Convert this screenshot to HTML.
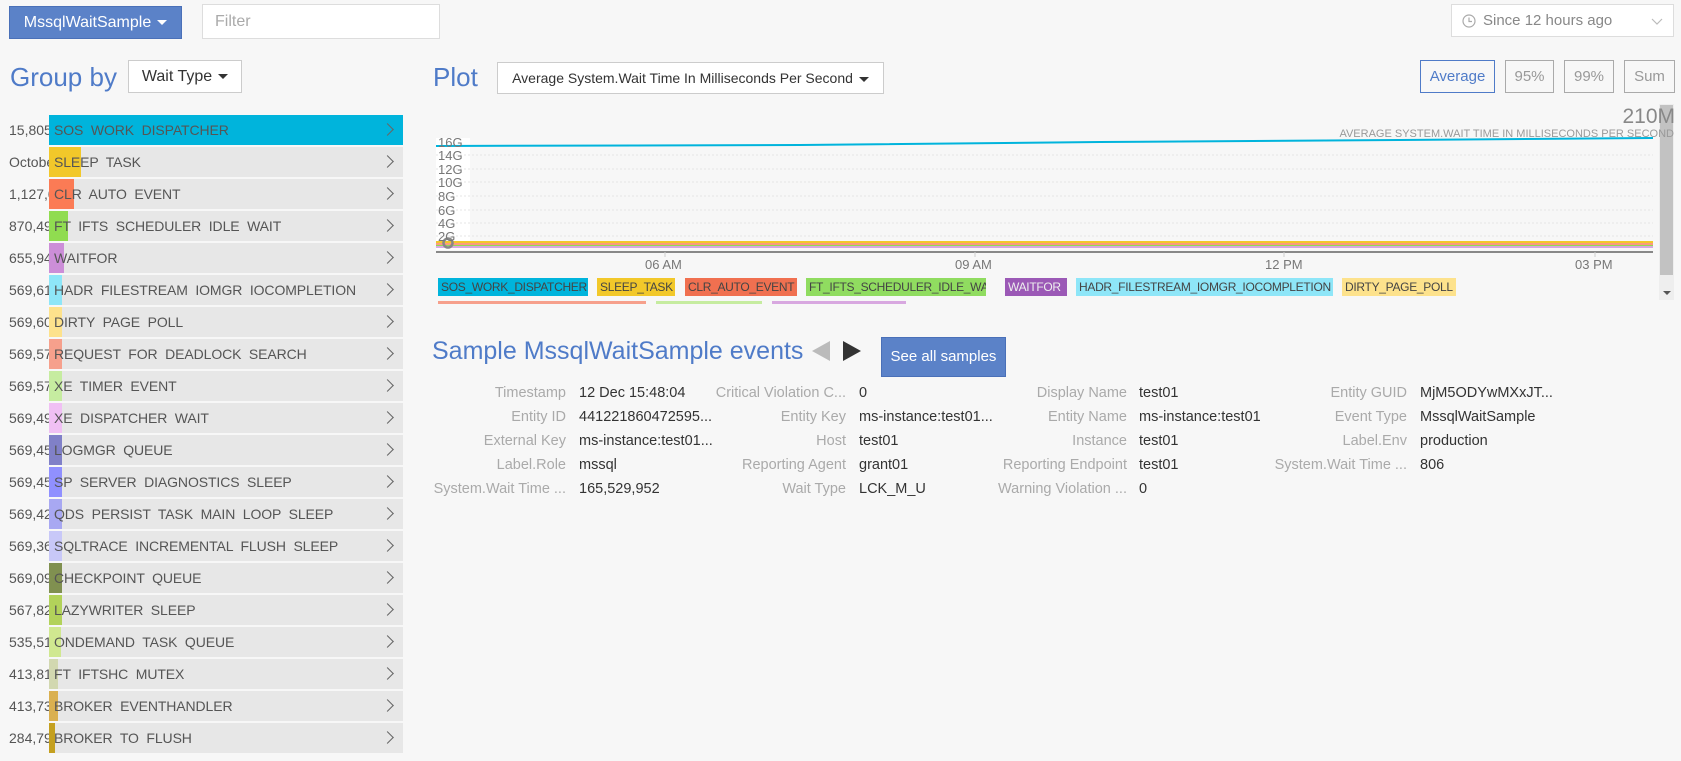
<!DOCTYPE html>
<html><head><meta charset="utf-8"><style>
*{box-sizing:border-box;margin:0;padding:0}
body{width:1681px;height:761px;background:#f7f7f7;font-family:"Liberation Sans",sans-serif;position:relative;overflow:hidden;color:#333}
.a{position:absolute}
.caret{display:inline-block;width:0;height:0;border-left:5px solid transparent;border-right:5px solid transparent;border-top:5px solid currentColor;vertical-align:middle;margin-left:6px}
.row{position:absolute;left:49px;width:354px;height:30px;background:#e7e7e7;overflow:hidden}
.row .sw{position:absolute;left:0;top:0;height:30px}
.row .t{position:absolute;left:5px;top:7px;font-size:14px;letter-spacing:-.1px;color:#555;white-space:pre}
.row .ch{position:absolute;top:10px;width:9px;height:9px;border-right:1.3px solid #666;border-top:1.3px solid #666;transform:rotate(45deg);right:11px}
.num{position:absolute;left:9px;font-size:14px;color:#555}
.btn{position:absolute;border:1px solid #aaa;background:#f7f7f7;color:#999;font-size:15px;text-align:center;line-height:31px;height:33px}
.lg{position:absolute;top:278px;height:18px;font-size:12px;letter-spacing:-.3px;line-height:18px;padding-left:3px;color:#444;white-space:nowrap;overflow:hidden}
.lb{position:absolute;font-size:14.5px;color:#aaa;text-align:right;white-space:nowrap}
.vl{position:absolute;font-size:14.5px;color:#333;white-space:nowrap}
.yl{position:absolute;left:438px;font-size:13px;color:#777;line-height:13px}
.xl{position:absolute;top:257px;font-size:13px;color:#777}
</style></head><body>
<div class="a" style="left:9px;top:6px;width:173px;height:33px;background:#5b82c8;border:1px solid #4a70b8;color:#fff;font-size:16px;line-height:31px;text-align:center">MssqlWaitSample<span class="caret" style="border-top-color:#fff"></span></div>
<div class="a" style="left:202px;top:4px;width:238px;height:35px;background:#fff;border:1px solid #ddd;color:#aaa;font-size:16px;line-height:33px;padding-left:12px">Filter</div>
<div class="a" style="left:1451px;top:4px;width:223px;height:33px;background:#fff;border:1px solid #ddd;color:#888;font-size:15px;line-height:31px;padding-left:31px">Since 12 hours ago
<svg class="a" style="left:10px;top:9px" width="14" height="14"><circle cx="7" cy="7" r="6" fill="none" stroke="#aaa" stroke-width="1.2"/><path d="M7 3.5V7.5H10" fill="none" stroke="#aaa" stroke-width="1.2"/></svg>
<svg class="a" style="left:199px;top:13px" width="12" height="8"><path d="M1 1L6 6L11 1" fill="none" stroke="#bbb" stroke-width="1.2"/></svg></div>

<div class="a" style="left:10px;top:62px;font-size:26px;color:#4f7bc8">Group by</div>
<div class="a" style="left:128px;top:60px;width:114px;height:33px;background:#fff;border:1px solid #ccc;font-size:16px;line-height:31px;text-align:center;color:#333">Wait Type<span class="caret"></span></div>

<div class="num" style="top:122px">15,805</div><div class="num" style="top:154px">October</div><div class="num" style="top:186px">1,127,0</div><div class="num" style="top:218px">870,49</div><div class="num" style="top:250px">655,94</div><div class="num" style="top:282px">569,61</div><div class="num" style="top:314px">569,60</div><div class="num" style="top:346px">569,57</div><div class="num" style="top:378px">569,57</div><div class="num" style="top:410px">569,49</div><div class="num" style="top:442px">569,45</div><div class="num" style="top:474px">569,45</div><div class="num" style="top:506px">569,42</div><div class="num" style="top:538px">569,36</div><div class="num" style="top:570px">569,09</div><div class="num" style="top:602px">567,82</div><div class="num" style="top:634px">535,51</div><div class="num" style="top:666px">413,81</div><div class="num" style="top:698px">413,73</div><div class="num" style="top:730px">284,79</div>

<div class="row" style="top:115px;background:#00b4dc"><div class="t">SOS  WORK  DISPATCHER</div><div class="ch"></div></div>
<div class="row" style="top:147px"><div class="sw" style="width:32px;background:#f2c82a"></div><div class="t">SLEEP  TASK</div><div class="ch"></div></div>
<div class="row" style="top:179px"><div class="sw" style="width:25px;background:#fb7b55"></div><div class="t">CLR  AUTO  EVENT</div><div class="ch"></div></div>
<div class="row" style="top:211px"><div class="sw" style="width:19px;background:#90dc50"></div><div class="t">FT  IFTS  SCHEDULER  IDLE  WAIT</div><div class="ch"></div></div>
<div class="row" style="top:243px"><div class="sw" style="width:15px;background:#cc8ed8"></div><div class="t">WAITFOR</div><div class="ch"></div></div>
<div class="row" style="top:275px"><div class="sw" style="width:13px;background:#8ee6f8"></div><div class="t">HADR  FILESTREAM  IOMGR  IOCOMPLETION</div><div class="ch"></div></div>
<div class="row" style="top:307px"><div class="sw" style="width:13px;background:#fde28c"></div><div class="t">DIRTY  PAGE  POLL</div><div class="ch"></div></div>
<div class="row" style="top:339px"><div class="sw" style="width:13px;background:#f6a08c"></div><div class="t">REQUEST  FOR  DEADLOCK  SEARCH</div><div class="ch"></div></div>
<div class="row" style="top:371px"><div class="sw" style="width:13px;background:#c6eca0"></div><div class="t">XE  TIMER  EVENT</div><div class="ch"></div></div>
<div class="row" style="top:403px"><div class="sw" style="width:13px;background:#f0c0f4"></div><div class="t">XE  DISPATCHER  WAIT</div><div class="ch"></div></div>
<div class="row" style="top:435px"><div class="sw" style="width:13px;background:#8080c8"></div><div class="t">LOGMGR  QUEUE</div><div class="ch"></div></div>
<div class="row" style="top:467px"><div class="sw" style="width:13px;background:#9090ff"></div><div class="t">SP  SERVER  DIAGNOSTICS  SLEEP</div><div class="ch"></div></div>
<div class="row" style="top:499px"><div class="sw" style="width:13px;background:#a8a8f2"></div><div class="t">QDS  PERSIST  TASK  MAIN  LOOP  SLEEP</div><div class="ch"></div></div>
<div class="row" style="top:531px"><div class="sw" style="width:13px;background:#c8c8f8"></div><div class="t">SQLTRACE  INCREMENTAL  FLUSH  SLEEP</div><div class="ch"></div></div>
<div class="row" style="top:563px"><div class="sw" style="width:13px;background:#809050"></div><div class="t">CHECKPOINT  QUEUE</div><div class="ch"></div></div>
<div class="row" style="top:595px"><div class="sw" style="width:13px;background:#b2d25a"></div><div class="t">LAZYWRITER  SLEEP</div><div class="ch"></div></div>
<div class="row" style="top:627px"><div class="sw" style="width:12px;background:#d0e890"></div><div class="t">ONDEMAND  TASK  QUEUE</div><div class="ch"></div></div>
<div class="row" style="top:659px"><div class="sw" style="width:9px;background:#d2d8b0"></div><div class="t">FT  IFTSHC  MUTEX</div><div class="ch"></div></div>
<div class="row" style="top:691px"><div class="sw" style="width:9px;background:#dab050"></div><div class="t">BROKER  EVENTHANDLER</div><div class="ch"></div></div>
<div class="row" style="top:723px"><div class="sw" style="width:6px;background:#c4a020"></div><div class="t">BROKER  TO  FLUSH</div><div class="ch"></div></div>

<div class="a" style="left:433px;top:62px;font-size:26px;color:#4f7bc8">Plot</div>
<div class="a" style="left:497px;top:62px;width:387px;height:32px;background:#fff;border:1px solid #ccc;font-size:14px;line-height:30px;text-align:center;color:#333">Average System.Wait Time In Milliseconds Per Second<span class="caret"></span></div>
<div class="btn" style="left:1420px;top:60px;width:75px;border-color:#4f7bc8;color:#4f7bc8">Average</div>
<div class="btn" style="left:1505px;top:60px;width:49px">95%</div>
<div class="btn" style="left:1564px;top:60px;width:50px">99%</div>
<div class="btn" style="left:1624px;top:60px;width:51px">Sum</div>

<div class="a" style="left:1659px;top:104px;width:15px;height:196px;background:#eee"></div>
<div class="a" style="left:1660px;top:105px;width:13px;height:170px;background:#c2c2c2"></div>
<div class="a" style="left:1663px;top:291px;width:0;height:0;border-left:4px solid transparent;border-right:4px solid transparent;border-top:4px solid #555"></div>
<div class="a" style="right:6px;top:105px;font-size:21px;color:#888;z-index:2">210M</div>
<div class="a" style="right:7px;top:128px;font-size:11px;color:#999;z-index:2">AVERAGE SYSTEM.WAIT TIME IN MILLISECONDS PER SECOND</div>

<svg class="a" style="left:0;top:0" width="1681" height="320">
<rect x="436" y="138" width="34" height="112" fill="#fff"/>
<g stroke="#e6e6e6" stroke-dasharray="2,2" stroke-width="1">
<line x1="436" y1="155" x2="1653" y2="155"/><line x1="436" y1="169" x2="1653" y2="169"/><line x1="436" y1="182" x2="1653" y2="182"/><line x1="436" y1="196" x2="1653" y2="196"/><line x1="436" y1="210" x2="1653" y2="210"/><line x1="436" y1="223" x2="1653" y2="223"/><line x1="436" y1="236" x2="1653" y2="236"/></g>
<polyline points="436,146 800,145 1100,142 1400,140 1653,138" fill="none" stroke="#00b4dc" stroke-width="2"/>
<line x1="436" y1="242" x2="1653" y2="242" stroke="#f2c82a" stroke-width="2"/>
<line x1="436" y1="244" x2="1653" y2="244" stroke="#fb7b55" stroke-width="1.5"/>
<line x1="436" y1="245.5" x2="1653" y2="245.5" stroke="#90dc50" stroke-width="1"/>
<line x1="436" y1="247" x2="1653" y2="247" stroke="#cc8ed8" stroke-width="1.5"/>
<line x1="436" y1="252" x2="1653" y2="252" stroke="#888" stroke-width="2"/>
<circle cx="448" cy="243" r="4.5" fill="none" stroke="#888" stroke-width="2.5"/>
<g stroke="#ccc"><line x1="665" y1="252" x2="665" y2="257"/><line x1="975" y1="252" x2="975" y2="257"/><line x1="1284" y1="252" x2="1284" y2="257"/><line x1="1595" y1="252" x2="1595" y2="257"/></g>
<rect x="438" y="301" width="208" height="3" fill="#f6a08c"/><rect x="656" y="301" width="106" height="3" fill="#c6eca0"/><rect x="772" y="301" width="134" height="3" fill="#d8a8e0"/>
</svg>
<div class="yl" style="top:136px">16G</div><div class="yl" style="top:149px">14G</div><div class="yl" style="top:163px">12G</div><div class="yl" style="top:176px">10G</div><div class="yl" style="top:190px">8G</div><div class="yl" style="top:204px">6G</div><div class="yl" style="top:217px">4G</div><div class="yl" style="top:230px">2G</div>
<div class="xl" style="left:645px">06 AM</div><div class="xl" style="left:955px">09 AM</div><div class="xl" style="left:1265px">12 PM</div><div class="xl" style="left:1575px">03 PM</div>

<div class="lg" style="left:438px;width:150px;background:#00b4dc">SOS_WORK_DISPATCHER</div>
<div class="lg" style="left:597px;width:78px;background:#f2c82a">SLEEP_TASK</div>
<div class="lg" style="left:685px;width:112px;background:#f07050">CLR_AUTO_EVENT</div>
<div class="lg" style="left:806px;width:180px;background:#90dc60">FT_IFTS_SCHEDULER_IDLE_WAIT</div>
<div class="lg" style="left:1005px;width:62px;background:#9b59b6;color:#eee">WAITFOR</div>
<div class="lg" style="left:1076px;width:257px;background:#8ee6f8">HADR_FILESTREAM_IOMGR_IOCOMPLETION</div>
<div class="lg" style="left:1342px;width:114px;background:#fde28c">DIRTY_PAGE_POLL</div>

<div class="a" style="left:432px;top:337px;font-size:25px;color:#4f7bc8">Sample MssqlWaitSample events</div>
<svg class="a" style="left:810px;top:339px" width="54" height="24"><path d="M20 2L2 12L20 22Z" fill="#bbb"/><path d="M33 2L51 12L33 22Z" fill="#333"/></svg>
<div class="a" style="left:881px;top:337px;width:125px;height:40px;background:#5b82c8;border:1px solid #4a70b8;color:#fff;font-size:15px;line-height:38px;text-align:center">See all samples</div>

<div class="lb" style="right:1115px;top:385px">Timestamp</div><div class="vl" style="left:579px;top:385px">12 Dec 15:48:04</div>
<div class="lb" style="right:1115px;top:409px">Entity ID</div><div class="vl" style="left:579px;top:409px">441221860472595...</div>
<div class="lb" style="right:1115px;top:433px">External Key</div><div class="vl" style="left:579px;top:433px">ms-instance:test01...</div>
<div class="lb" style="right:1115px;top:457px">Label.Role</div><div class="vl" style="left:579px;top:457px">mssql</div>
<div class="lb" style="right:1115px;top:481px">System.Wait Time ...</div><div class="vl" style="left:579px;top:481px">165,529,952</div>

<div class="lb" style="right:835px;top:385px">Critical Violation C...</div><div class="vl" style="left:859px;top:385px">0</div>
<div class="lb" style="right:835px;top:409px">Entity Key</div><div class="vl" style="left:859px;top:409px">ms-instance:test01...</div>
<div class="lb" style="right:835px;top:433px">Host</div><div class="vl" style="left:859px;top:433px">test01</div>
<div class="lb" style="right:835px;top:457px">Reporting Agent</div><div class="vl" style="left:859px;top:457px">grant01</div>
<div class="lb" style="right:835px;top:481px">Wait Type</div><div class="vl" style="left:859px;top:481px">LCK_M_U</div>

<div class="lb" style="right:554px;top:385px">Display Name</div><div class="vl" style="left:1139px;top:385px">test01</div>
<div class="lb" style="right:554px;top:409px">Entity Name</div><div class="vl" style="left:1139px;top:409px">ms-instance:test01</div>
<div class="lb" style="right:554px;top:433px">Instance</div><div class="vl" style="left:1139px;top:433px">test01</div>
<div class="lb" style="right:554px;top:457px">Reporting Endpoint</div><div class="vl" style="left:1139px;top:457px">test01</div>
<div class="lb" style="right:554px;top:481px">Warning Violation ...</div><div class="vl" style="left:1139px;top:481px">0</div>

<div class="lb" style="right:274px;top:385px">Entity GUID</div><div class="vl" style="left:1420px;top:385px">MjM5ODYwMXxJT...</div>
<div class="lb" style="right:274px;top:409px">Event Type</div><div class="vl" style="left:1420px;top:409px">MssqlWaitSample</div>
<div class="lb" style="right:274px;top:433px">Label.Env</div><div class="vl" style="left:1420px;top:433px">production</div>
<div class="lb" style="right:274px;top:457px">System.Wait Time ...</div><div class="vl" style="left:1420px;top:457px">806</div>
</body></html>
